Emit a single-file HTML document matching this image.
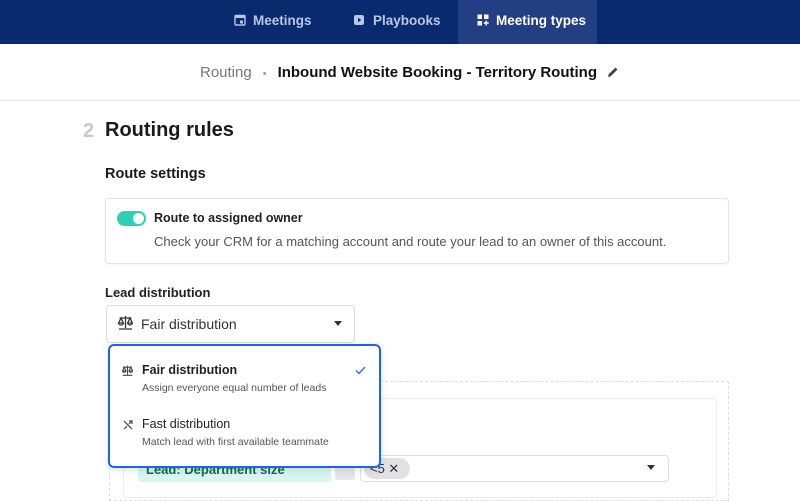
<!DOCTYPE html>
<html><head><style>
*{box-sizing:border-box;margin:0;padding:0}
body{width:800px;height:491px;overflow:hidden;background:#fff;font-family:"Liberation Sans",Arial,sans-serif;position:relative;color:#1d1d1f}
.nav{position:absolute;left:0;top:0;width:800px;height:44px;background:#092a6e}
.tab{position:absolute;top:0;height:44px;line-height:42px;color:#b9c6e6;font-size:13.5px;font-weight:bold}
.act{background:#213f82;color:#fff;border-radius:0 0 3px 3px}
.hdr{position:absolute;top:44px;left:0;width:800px;height:57px;border-bottom:1px solid #e6e6e6;font-size:15px;line-height:57px;padding-left:200px}
.abs{position:absolute}
</style></head><body>
<div class="nav">
 <div class="tab" style="left:234px"><svg width="12" height="12" viewBox="0 0 12 12" style="vertical-align:-1px;margin-right:7px"><rect x="1" y="1.5" width="10" height="9.5" rx="1" fill="none" stroke="#b9c6e6" stroke-width="1.4"/><rect x="1" y="1.5" width="10" height="2.5" fill="#b9c6e6"/><rect x="6" y="6.5" width="3" height="3" fill="#b9c6e6"/></svg>Meetings</div>
 <div class="tab" style="left:353px"><svg width="12" height="12" viewBox="0 0 12 12" style="vertical-align:-1px;margin-right:8px"><rect x="1" y="1" width="10" height="10" rx="2" fill="#b9c6e6"/><path d="M5 3.8v4.4l3.3-2.2z" fill="#092a6e"/></svg>Playbooks</div>
 <div class="tab act" style="left:458px;width:139px;padding-left:19px"><svg width="12" height="12" viewBox="0 0 12 12" style="vertical-align:-1px;margin-right:7px"><rect x="0.5" y="0.5" width="4.5" height="4.5" fill="#fff"/><rect x="7" y="0.5" width="4.5" height="4.5" fill="#fff"/><rect x="0.5" y="7" width="4.5" height="4.5" fill="#fff"/><path d="M9.2 6.5v5M6.7 9h5" stroke="#fff" stroke-width="1.4"/></svg><span style="color:#fff">Meeting types</span></div>
</div>
<div class="hdr"><span style="color:#777">Routing</span><span style="color:#999;margin:0 11px;font-size:11px">•</span><b style="color:#111">Inbound Website Booking - Territory Routing</b><svg width="12" height="12" viewBox="0 0 12 12" style="margin-left:10px;vertical-align:-1px"><path d="M1 11l.6-2.6L8.5 1.5l2 2-6.9 6.9z" fill="#444"/></svg></div>

<div class="abs" style="left:83px;top:120px;font-size:20px;font-weight:bold;color:#c8c8cc">2</div>
<div class="abs" style="left:105px;top:119px;font-size:20px;font-weight:bold;color:#1a1a1a">Routing rules</div>
<div class="abs" style="left:105px;top:166px;font-size:14.5px;font-weight:bold;color:#1a1a1a">Route settings</div>

<div class="abs" style="left:105px;top:198px;width:624px;height:66px;border:1px solid #e4e4e4;border-radius:4px;box-shadow:0 1px 2px rgba(0,0,0,.05)"></div>
<div class="abs" style="left:117px;top:211px;width:29px;height:15px;border-radius:8px;background:#2fcfb3"><div style="position:absolute;right:2px;top:2px;width:11px;height:11px;border-radius:50%;background:#fff"></div></div>
<div class="abs" style="left:154px;top:211px;font-size:12.5px;font-weight:bold;color:#222">Route to assigned owner</div>
<div class="abs" style="left:154px;top:234px;font-size:13px;color:#555">Check your CRM for a matching account and route your lead to an owner of this account.</div>

<div class="abs" style="left:105px;top:285px;font-size:13px;font-weight:bold;color:#222">Lead distribution</div>
<div class="abs" style="left:106px;top:305px;width:249px;height:38px;border:1px solid #dcdcdc;border-radius:4px"></div>
<svg class="abs" style="left:117px;top:315px" width="17" height="15" viewBox="0 0 17 15"><g fill="none" stroke="#333" stroke-width="1.3"><path d="M8.5 1v12M2 14h13M2.5 3h12M4 3l-2.3 5h4.6zM13 3l-2.3 5h4.6z"/><path d="M1.7 8a2.3 2 0 0 0 4.6 0M10.7 8a2.3 2 0 0 0 4.6 0"/></g></svg>
<div class="abs" style="left:141px;top:316px;font-size:14px;color:#333">Fair distribution</div>
<svg class="abs" style="left:334px;top:321px" width="8" height="5"><path d="M0 0h8L4 5z" fill="#333"/></svg>

<div class="abs" style="left:109px;top:381px;width:620px;height:120px;border:1px dashed #ddd"></div>
<div class="abs" style="left:123px;top:398px;width:594px;height:100px;border:1px solid #ececec;border-radius:4px"></div>
<div class="abs" style="left:138px;top:455px;width:193px;height:27px;background:#d9f5ef;border-radius:3px;color:#0f6b5a;font-weight:bold;font-size:13px;padding:7px 0 0 8px">Lead: Department size</div>
<div class="abs" style="left:335px;top:456px;width:20px;height:24px;background:#e6e6e6;border-radius:3px"></div>
<div class="abs" style="left:360px;top:455px;width:309px;height:27px;border:1px solid #ddd;border-radius:4px"></div>
<div class="abs" style="left:364px;top:458px;width:46px;height:21px;background:#e2e2e4;border-radius:11px;font-size:13px;color:#333;padding:3px 0 0 6px">&lt;5 ✕</div>
<svg class="abs" style="left:647px;top:465px" width="8" height="5"><path d="M0 0h8L4 5z" fill="#333"/></svg>

<div class="abs" style="left:108px;top:344px;width:273px;height:124px;background:#fff;border:2px solid #1f62f2;border-radius:6px;box-shadow:0 2px 8px rgba(0,0,0,.12)"></div>
<svg class="abs" style="left:121px;top:365px" width="13" height="11" viewBox="0 0 17 15"><g fill="none" stroke="#444" stroke-width="1.5"><path d="M8.5 1v12M2 14h13M2.5 3h12M4 3l-2.3 5h4.6zM13 3l-2.3 5h4.6z"/><path d="M1.7 8a2.3 2 0 0 0 4.6 0M10.7 8a2.3 2 0 0 0 4.6 0"/></g></svg>
<div class="abs" style="left:142px;top:363px;font-size:12.5px;font-weight:bold;color:#222">Fair distribution</div>
<div class="abs" style="left:142px;top:382px;font-size:10.5px;color:#555">Assign everyone equal number of leads</div>
<svg class="abs" style="left:355px;top:366px" width="11" height="9"><path d="M1 4.5l3 3L10 1" fill="none" stroke="#2f6bf0" stroke-width="1.3"/></svg>
<svg class="abs" style="left:123px;top:420px" width="10" height="10" viewBox="0 0 10 10"><path d="M1 1l8 8M6 1h3v3M1 9l3-3M9 1L6 4" fill="none" stroke="#444" stroke-width="1.2"/></svg>
<div class="abs" style="left:142px;top:417px;font-size:12.5px;color:#222">Fast distribution</div>
<div class="abs" style="left:142px;top:436px;font-size:10.5px;color:#555">Match lead with first available teammate</div>
</body></html>
